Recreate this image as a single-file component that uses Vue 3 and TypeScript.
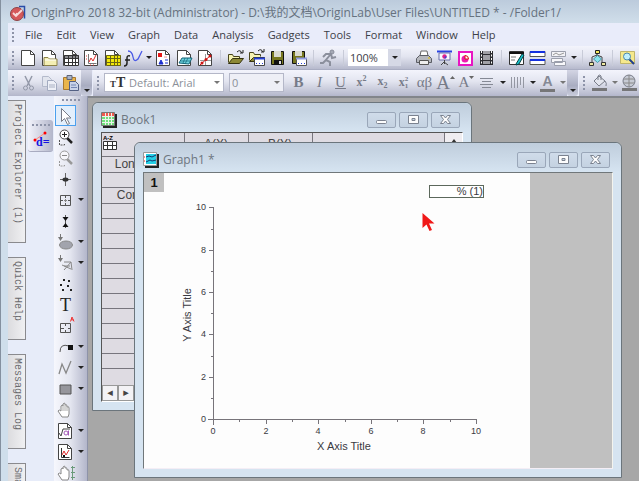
<script setup lang="ts">
interface Item {
  kind: 'icon' | 'caret' | 'sep' | 'zoom'
  name?: string
  label?: string
}

const page = '<path d="M3.500 2.500h9l4 4v11h-13z" fill="#fff" stroke="#444"/><path d="M12.500 2.500v4h4" fill="none" stroke="#444"/>'
const grid = '<path d="M4 7h15v3H4z" fill="#8a8a8e"/><path d="M4.500 7.500h14v10h-14zM4 10.500h15M4 14.500h15M8.500 7v11M12.500 7v11M15.500 7v11" fill="none" stroke="#333"/>'

const glyphs: Record<string, string> = {
  new: page,
  folder: page + '<path d="M5 9.500h4l1.500 1.500h7.500v6.500H5z" fill="#f4efb4" stroke="#8b8146"/><path d="M6 12h11" stroke="#fff"/>',
  book: page + '<path d="M4 7h15v11H4z" fill="#fff"/>' + grid,
  graph: page + '<path d="M7.500 6v9.500h8" fill="none" stroke="#777"/><path d="M8 14l2-4 2 3 3-6" fill="none" stroke="#e02a2a"/><path d="M5 8h1M5 11h1M9 17h1M12 17h1" stroke="#d33"/>',
  matrix: page + '<path d="M4 7h15v11H4z" fill="#f2e90a"/><path d="M4.500 7.500h14v10h-14zM4 10.500h15M4 14.500h15M8.500 7v11M12.500 7v11M15.500 7v11" fill="none" stroke="#6b6614"/>',
  fn: '<path d="M7 8q-3-1-3 2v5q0 3-3 3M2 12h5" fill="none" stroke="#222" stroke-width="1.500"/><path d="M5 3q4 0 5 6t5 2l4-8" fill="none" stroke="#4b5ae6" stroke-width="1.300"/>',
  layout: page + '<path d="M5 5h4v4H5z" fill="#e41616"/><path d="M6 16l2-4 2 4zM12 15h3M12 12h3" stroke="#1b2fd0" fill="#1b2fd0"/><path d="M11 9h3" stroke="#e99"/>',
  surface: page + '<path d="M5 15l3-5h10l-3 6z" fill="#6fd4e0" stroke="#146478"/><path d="M7 13h9M11 10l-2 5M14 10l-3 6" stroke="#146478" stroke-width=".7"/>',
  funcplot: page + '<path d="M10.500 6v11M5 12.500h11" stroke="#999"/><path d="M5 17l11-10" stroke="#d01414"/><circle cx="7" cy="15" r="1.500" fill="#d01414"/><circle cx="11" cy="11.500" r="1.500" fill="#d01414"/><circle cx="15" cy="8" r="1.500" fill="#d01414"/>',
  open: '<path d="M3.500 14.500v-8h4l1 2h6v2" fill="#f6f3b3" stroke="#48441a"/><path d="M3.500 15.500l4-5h11l-4 5z" fill="#8c8836" stroke="#36330f"/><path d="M12 4q3-3 5 1m1-3v3h-3" fill="none" stroke="#222"/>',
  opent: '<path d="M3.500 12.500v-8h4l1 2h6v2" fill="#f6f3b3" stroke="#48441a"/><path d="M3.500 13.500l4-4h11l-4 4z" fill="#8c8836" stroke="#36330f"/><path d="M12 3q3-3 5 1m1-3v3h-3" fill="none" stroke="#222"/><path d="M8.500 10.500h10v7h-10z" fill="#fff" stroke="#444"/><path d="M8 10.500h11" stroke="#2540d8" stroke-width="2"/><path d="M10 15.500h7" stroke="#2540d8" stroke-dasharray="1 2"/>',
  save: '<path d="M4.500 3.500h12v13h-12z" fill="#77771f" stroke="#111"/><path d="M7 3h7v6H7z" fill="#d9d9cf"/><path d="M7 12h8v5H7z" fill="#111"/><path d="M12 13h2v3h-2z" fill="#ddd"/>',
  savet: '<path d="M4.500 3.500h12v12h-12z" fill="#77771f" stroke="#111"/><path d="M7 3h7v5H7z" fill="#d9d9cf"/><path d="M8.500 10.500h10v7h-10z" fill="#fff" stroke="#555"/><path d="M8 10.500h11" stroke="#8f9be0" stroke-width="2"/><path d="M10 15.500h7" stroke="#2540d8" stroke-dasharray="1 2"/>',
  run: '<circle cx="14" cy="4" r="2" fill="#a5a9b5" stroke="#898d9a"/><path d="M5 9l3-3h5l1 4 4-1M12 7l-4 5 4 2v4M8 12l-3 3H2" fill="none" stroke="#8b8f9c" stroke-width="2"/>',
  print: '<path d="M7 8l1-5h6l1 5" fill="#fff" stroke="#666"/><path d="M3.500 10.500l3-3h9l3 3v4h-15z" fill="#b6b8be" stroke="#5b5d65"/><path d="M6.500 12.500h9v4h-9z" fill="#eee" stroke="#555"/><path d="M15 10h2" stroke="#e9c400"/>',
  slides: '<path d="M3 3.500h15" stroke="#2a43e0" stroke-width="2"/><path d="M5 5h11v7H5z" fill="#f8f8ff" stroke="#6a70a8"/><circle cx="10.500" cy="8.500" r="2.200" fill="#e0208c"/><path d="M10.500 8.500h2.200a2.200 2.200 0 0 1-2 2.200z" fill="#2b45dc"/><path d="M10.500 12v4M7 17l3-3 4 3" fill="none" stroke="#444"/>',
  magenta: '<path d="M4 4h13v13H4z" fill="#fff" stroke="#e815c2" stroke-width="2"/><circle cx="10" cy="11" r="3.500" fill="#ee1cae"/><path d="M10 11V7.500a3.500 3.500 0 0 1 3.500 3.500z" fill="#fff" stroke="#d11"/>',
  film: '<path d="M4 3h13v14H4z" fill="#2c2c31"/><path d="M7 3h7v3H7zM7 7h7v5H7zM7 13h7v3H7z" fill="#a0a0a6"/><path d="M5.500 3v14M15.500 3v14" stroke="#fff" stroke-dasharray="2 1.500"/>',
  edit: '<path d="M3.500 3.500h14v13h-14z" fill="#fff" stroke="#333"/><path d="M3 4h15v2H3z" fill="#111"/><path d="M5 9h5M5 12h4" stroke="#777"/><path d="M10 16l6-10 2 1-5 9-3 1z" fill="#18c6cf" stroke="#063c40"/>',
  split: '<path d="M3 3.500h15v5H3zM3 11.500h15v5H3z" fill="#fff" stroke="#555"/><path d="M3 4h15M3 12h15" stroke="#1430df" stroke-width="2"/>',
  stack: '<path d="M3.500 3.500h14v5h-14z" fill="#f3f3f7" stroke="#9b9fac"/><path d="M5 7l3-2 3 2 5-2" fill="none" stroke="#999"/><path d="M3.500 10.500h11v4h-11zM6.500 13.500h11v4h-11z" fill="#f8f8fb" stroke="#9b9fac"/>',
  tree: '<path d="M10 4v4M5 14V9l5-2 5 2v5" stroke="#444" fill="none"/><path d="M8.500 2.500h4v3h-4z" fill="#f5e95c" stroke="#222"/><path d="M10.500 7.500l4 3.500-4 3.500-4-3.500z" fill="#8be4ee" stroke="#4798aa"/><path d="M2.500 14.500h4v3h-4zM14.500 14.500h4v3h-4z" fill="#eee9a0" stroke="#333"/>',
  find: '<path d="M3.500 3.500h14v12h-14z" fill="#f6e98c" stroke="#c0b56b"/><path d="M12 11l5 5" stroke="#1f3d8c" stroke-width="2"/><circle cx="10" cy="8.500" r="3.500" fill="#bff0ff" stroke="#4b88aa"/>',
  cut: '<path d="M7 3l5 10M14 3L9 13" stroke="#9398a8" stroke-width="1.500"/><circle cx="7.500" cy="15" r="2" fill="none" stroke="#9398a8"/><circle cx="13.500" cy="15" r="2" fill="none" stroke="#9398a8"/>',
  copy: '<path d="M3.500 3.500h6l3 3v7h-9z" fill="#e2e5ee" stroke="#b4bacb"/><path d="M8.500 7.500h6l3 3v7h-9z" fill="#eef0f7" stroke="#a3abc0"/><path d="M10 12h6M10 14h6" stroke="#aab1c3"/>',
  paste: '<path d="M3.500 4.500h12v12h-12z" fill="#eab54c" stroke="#a9792f"/><path d="M7 2.500h5v4H7z" fill="#aab3c6" stroke="#5d6578"/><path d="M9.500 8.500h6l3 3v6h-9z" fill="#c9d2e8" stroke="#536084"/><path d="M11 12h5M11 14.500h6" stroke="#7385b4"/>',
  align: '<path d="M3 5.500h13M5 8.500h9M3 11.500h13M5 14.500h9" stroke="#858995"/>',
  columns: '<path d="M4.500 4v11M7.500 4v11M10.500 4v11M13.500 4v8M16.500 4v11" stroke="#9497a2"/>',
  bucket: '<path d="M5 8l5-5 6 5-6 5z" fill="#e3e5ed" stroke="#787c88"/><path d="M9 7V3q2-2 3 0v4M16 8q2 2 1 5" fill="none" stroke="#787c88"/><path d="M3 15h15v3H3z" fill="#767678"/>',
  globe: '<circle cx="10" cy="8" r="6" fill="#c7cbd5" stroke="#787c88"/><path d="M5 6h10M5 10h10M10 2v12" stroke="#888"/><path d="M3 15h15v3H3z" fill="#767678"/>',
  pointer: '<path d="M6.500 2.500v13l3-3 3 6 2-1-3-5.500h4.500z" fill="#fff" stroke="#777b86"/>',
  zoomin: '<path d="M12 11l5 5" stroke="#222" stroke-width="2.500"/><circle cx="9.500" cy="7.500" r="4.500" fill="#fff" stroke="#444"/><path d="M7 7.500h5M9.500 5v5" stroke="#222"/><path d="M4.500 13v5h5v-2" fill="none" stroke="#555" stroke-dasharray="2 1"/>',
  zoomout: '<path d="M12 11l5 5" stroke="#999" stroke-width="2.500"/><circle cx="9.500" cy="7.500" r="4.500" fill="#f7f7fb" stroke="#999"/><path d="M7 7.500h5" stroke="#888"/><path d="M4.500 13v5h5v-2" fill="none" stroke="#999" stroke-dasharray="2 1"/>',
  reader: '<path d="M10.500 4v13M5 10.500h11" stroke="#666"/><ellipse cx="10.500" cy="10.500" rx="3" ry="2" fill="#333"/>',
  screen: '<path d="M5.500 5.500h10v10h-10zM10.500 5v3M10.500 13v3M5 10.500h3M13 10.500h3" fill="none" stroke="#555"/><path d="M9 10.500h3M10.500 9v3" stroke="#888"/>',
  data: '<path d="M10.500 4v13" stroke="#555"/><path d="M7.500 6h6l-3 4zM7.500 16h6l-3-4z" fill="#111"/>',
  region: '<ellipse cx="11" cy="13" rx="6.500" ry="4" fill="#a2a4ad" stroke="#888"/><path d="M5.500 2v6" stroke="#777"/><path d="M3 5h5l-2.500 4z" fill="#777"/>',
  mask: '<path d="M5.500 2v6" stroke="#777"/><path d="M3 5h5l-2.500 4z" fill="#777"/><path d="M9 9h7M9 17l7-8M7 12l9 4M16 9l1 8M9 13h6" fill="none" stroke="#888"/>',
  draw: '<path d="M8 5h2v2H8zM13 6h2v2h-2zM5 10h2v2H5zM12 11h2v2h-2zM7 15h2v2H7zM15 15h2v2h-2z" fill="#222"/>',
  anno: '<path d="M5.500 7.500h10v9h-10zM10.500 7v3M10.500 14v3M5 12.500h4M13 12.500h3" fill="none" stroke="#555"/><path d="M15.500 5.500l1.500-4.500 2 4.500M16 3.800h2.500" fill="none" stroke="#e33"/>',
  arrow: '<path d="M5 15q0-9 9-6" fill="none" stroke="#555"/><path d="M13 8h5v5h-5z" fill="#111"/>',
  line: '<path d="M4 16L7 6l4 9 5-12" fill="none" stroke="#888" stroke-width="1.300"/>',
  rect: '<path d="M5 6h11v9H5z" fill="#96969c" stroke="#555"/>',
  hand: '<path d="M7 17l-4-6q1-2 3 0V6q2-2 2 0V4q2-2 2 0v1q2-1 2 1v1q2-1 2 1v6l-1 3z" fill="#fff" stroke="#888"/><path d="M8 6v5M10 5v6M12 6v5" stroke="#aaa"/>',
  root: page + '<path d="M4 12l2 3 2-7h7" fill="none" stroke="#444"/><circle cx="11" cy="12" r="2" fill="none" stroke="#a45ab8"/><path d="M13.500 9.500v5" stroke="#a45ab8"/>',
  inset: page + '<path d="M6.500 6v9.500h8" fill="none" stroke="#333"/><path d="M7 13l2-4 2 4 3-5" fill="none" stroke="#e02a2a"/><path d="M8 14h2" stroke="#111" stroke-width="2"/>',
  handr: '<path d="M7 17l-4-6q1-2 3 0V6q2-2 2 0V4q2-2 2 0v1q2-1 2 1v1q2-1 2 1v6l-1 3z" fill="#fff" stroke="#888"/><path d="M17.500 3v14M16 4.500h4M16 9.500h4M16 14.500h4" stroke="#6a9a7a"/>',
}

const icon = (name: string, label: string): Item => ({ kind: 'icon', name, label })
const caret = (label: string): Item => ({ kind: 'caret', label })
const sep: Item = { kind: 'sep' }

const standard: Item[] = [
  icon('new', 'New project'), icon('folder', 'New folder'), icon('book', 'New workbook'),
  icon('graph', 'New graph'), icon('matrix', 'New matrix'), icon('fn', 'New function'),
  caret('Function types'), icon('layout', 'New layout'), icon('surface', 'New surface'),
  icon('funcplot', 'New plot'), sep, icon('open', 'Open'), icon('opent', 'Open template'),
  icon('save', 'Save'), icon('savet', 'Save template'), sep, icon('run', 'Run'), sep,
  { kind: 'zoom' }, icon('print', 'Print'), icon('slides', 'Slide show'),
  icon('magenta', 'Send to slides'), icon('film', 'Video builder'), sep,
  icon('edit', 'Edit'), icon('split', 'Split'), icon('stack', 'Arrange'), caret('Arrange options'),
  sep, icon('tree', 'Project tree'), sep, icon('find', 'Find'),
]

const menus = ['File', 'Edit', 'View', 'Graph', 'Data', 'Analysis', 'Gadgets', 'Tools', 'Format', 'Window', 'Help']
const tabs = ['Project Explorer (1)', 'Quick Help', 'Messages Log', 'Smart Hint Log']

const tools: { name: string; label: string; menu?: boolean }[] = [
  { name: 'pointer', label: 'Pointer' }, { name: 'zoomin', label: 'Zoom in' },
  { name: 'zoomout', label: 'Zoom out' }, { name: 'reader', label: 'Data reader' },
  { name: 'screen', label: 'Screen reader', menu: true }, { name: 'data', label: 'Data selector' },
  { name: 'region', label: 'Region', menu: true }, { name: 'mask', label: 'Mask', menu: true },
  { name: 'draw', label: 'Draw data' }, { name: 'text', label: 'Text' },
  { name: 'anno', label: 'Annotation' }, { name: 'arrow', label: 'Arrow', menu: true },
  { name: 'line', label: 'Line', menu: true }, { name: 'rect', label: 'Rectangle', menu: true },
  { name: 'hand', label: 'Pan' }, { name: 'root', label: 'Equation', menu: true },
  { name: 'inset', label: 'Insert graph', menu: true }, { name: 'handr', label: 'Rescale' },
]

const rows = ['Long Name', '', 'Comments', '', '', '', '', '', '', '', '', '', '', '']
const ticks = [0, 1, 2, 3, 4, 5, 6, 7, 8, 9, 10]
const tickX = (v: number): number => 70 + Math.round(v * 26.3)
const tickY = (v: number): number => 247 - Math.round(v * 21.15)
</script>

<template>
  <div class="app">
    <header class="title">
      <svg class="logo" width="18" height="18" viewBox="0 0 18 18">
        <path d="M10 2.500h5.500v12" fill="none" stroke="#2a4ba8" stroke-width="1.500" />
        <circle cx="8" cy="10" r="6.500" fill="#d5585a" stroke="#8d4347" />
        <path d="M4 9l3 3 6-6M7 12l1-3" fill="none" stroke="#f7dada" stroke-width="1.800" />
      </svg>
      <h1>OriginPro 2018 32-bit (Administrator) - D:\我的文档\OriginLab\User Files\UNTITLED * - /Folder1/</h1>
    </header>

    <nav class="menu">
      <i class="grip"></i>
      <button v-for="m in menus" :key="m">{{ m }}</button>
    </nav>

    <div class="bar">
      <i class="grip"></i>
      <template v-for="(it, i) in standard" :key="i">
        <button v-if="it.kind === 'icon'" class="tool" :aria-label="it.label">
          <svg width="21" height="20" viewBox="0 0 21 20" v-html="glyphs[it.name ?? '']"></svg>
        </button>
        <button v-else-if="it.kind === 'caret'" class="caret" :aria-label="it.label"></button>
        <i v-else-if="it.kind === 'sep'" class="sep"></i>
        <span v-else class="combo zoom">
          <select aria-label="Zoom"><option>100%</option></select><i class="drop"></i>
        </span>
      </template>
    </div>

    <div class="bar format">
      <div class="group">
        <i class="grip"></i>
        <button v-for="n in ['cut', 'copy', 'paste']" :key="n" class="tool" :aria-label="n">
          <svg width="21" height="20" viewBox="0 0 21 20" v-html="glyphs[n]"></svg>
        </button>
      </div>
      <button class="overflow" aria-label="More edit buttons"></button>
      <div class="group">
        <i class="grip"></i>
        <span class="combo font">
          <b class="tt" aria-hidden="true"><small>T</small>T</b>
          <select aria-label="Font"><option>Default: Arial</option></select><i class="drop"></i>
        </span>
        <span class="combo size">
          <select aria-label="Font size"><option>0</option></select><i class="drop"></i>
        </span>
        <button class="tool serif"><b>B</b></button>
        <button class="tool serif"><em>I</em></button>
        <button class="tool serif"><u>U</u></button>
        <button class="tool serif sm"><span>x<sup>2</sup></span></button>
        <button class="tool serif sm"><span>x<sub>2</sub></span></button>
        <button class="tool serif sm">x<span class="both"><span>2</span><span>1</span></span></button>
        <button class="tool serif">αβ</button>
        <button class="tool serif lg">A<svg width="5" height="14"><path d="M0 3l2.500-3L5 3z" fill="#666" /></svg></button>
        <button class="tool serif">A<svg width="5" height="14"><path d="M0 0h5L2.500 3z" fill="#666" /></svg></button>
        <button class="tool" aria-label="Align"><svg width="21" height="20" v-html="glyphs.align"></svg></button>
        <button class="caret" aria-label="Align options"></button>
        <button class="tool" aria-label="Columns"><svg width="21" height="20" v-html="glyphs.columns"></svg></button>
        <button class="caret" aria-label="Column options"></button>
        <button class="tool colour">A</button>
        <button class="caret dim" aria-label="Font colours"></button>
      </div>
      <button class="overflow" aria-label="More format buttons"></button>
      <div class="group last">
        <i class="grip"></i>
        <button class="tool" aria-label="Fill"><svg width="21" height="20" v-html="glyphs.bucket"></svg></button>
        <button class="caret dim" aria-label="Fill colours"></button>
        <button class="tool" aria-label="Line colour"><svg width="21" height="20" v-html="glyphs.globe"></svg></button>
      </div>
    </div>

    <main class="body">
      <aside class="tabs">
        <button v-for="t in tabs" :key="t">{{ t }}</button>
      </aside>
      <div class="dock">
        <div class="mini">
          <i class="hgrip"></i>
          <svg width="22" height="22" viewBox="0 0 22 22">
            <path d="M7 13L17 6" stroke="#ff8a7a" />
            <circle cx="7" cy="13" r="1.500" fill="#f00" /><circle cx="17" cy="6" r="1.500" fill="#f00" />
            <text x="8" y="19" class="dtext">d=</text>
          </svg>
        </div>
      </div>
      <div class="palette">
        <i class="hgrip"></i>
        <div v-for="(t, i) in tools" :key="t.name" class="prow">
          <button class="tool" :class="{ on: i === 0, big: t.name === 'text' }" :aria-label="t.label">
            <template v-if="t.name === 'text'">T</template>
            <svg v-else width="21" height="20" v-html="glyphs[t.name]"></svg>
          </button>
          <button v-if="t.menu" class="caret" :aria-label="t.label + ' options'"></button>
        </div>
      </div>

      <section class="space">
        <article class="win book">
          <header>
            <svg width="18" height="18" viewBox="0 0 18 18">
              <path d="M3 3h14v14H3z" fill="#222" /><path d="M1.500 1.500h13v13h-13z" fill="#6fe07c" stroke="#777" />
              <path d="M2 2h12v3H2z" fill="#f05a4e" /><path d="M2 5.500h12M2 8.500h12M2 11.500h12M5.500 2v12M8.500 2v12M11.500 2v12" stroke="#e9f5ea" />
            </svg>
            <h2>Book1</h2>
            <span class="ctl">
              <button aria-label="Minimize"><svg width="13" height="11"><rect x="1.500" y="6.500" width="10" height="3" rx="1" /></svg></button>
              <button aria-label="Maximize"><svg width="13" height="11"><path d="M1.500 1.500h10v8h-10zM5 4.500h3v2H5z" fill-rule="evenodd" /></svg></button>
              <button aria-label="Close"><svg width="13" height="11"><path d="M1.500 1.500h3l2 2.500 2-2.500h3L8.500 5.500l3 4h-3l-2-2.500-2 2.500h-3l3-4z" /></svg></button>
            </span>
          </header>
          <div class="sheet">
            <table>
              <thead>
                <tr>
                  <th>
                    <svg width="15" height="15" viewBox="0 0 15 15"><text x="0" y="5" class="az">A-Z</text><path d="M.5 6.500h13v8H.5zM0 10.500h14M4.500 6v9M9.500 6v9" fill="#fff" stroke="#333" /></svg>
                  </th>
                  <th>A(X)</th><th>B(Y)</th><th></th>
                </tr>
              </thead>
              <tbody>
                <tr v-for="(r, i) in rows" :key="i"><th>{{ r }}</th><td></td><td></td><td></td></tr>
              </tbody>
            </table>
            <div class="vscroll"><button class="up" aria-label="Scroll up"></button></div>
            <div class="hscroll"><button aria-label="Scroll left">◂</button><button aria-label="Scroll right">▸</button></div>
          </div>
        </article>

        <article class="win plotwin">
          <header>
            <svg width="18" height="18" viewBox="0 0 18 18">
              <path d="M3 3h14v14H3z" fill="#222" /><path d="M1.500 1.500h13v13h-13z" fill="#fff" stroke="#999" />
              <path d="M4 3h10v10H4z" fill="#23cfe6" /><path d="M4 6l3-1 3 1 4-2M4 11l4-2 2 1 4-1" fill="none" stroke="#14386c" />
              <path d="M2 6h1M2 10h1" stroke="#e22" />
            </svg>
            <h2>Graph1 *</h2>
            <span class="ctl">
              <button aria-label="Minimize"><svg width="13" height="11"><rect x="1.500" y="6.500" width="10" height="3" rx="1" /></svg></button>
              <button aria-label="Maximize"><svg width="13" height="11"><path d="M1.500 1.500h10v8h-10zM5 4.500h3v2H5z" fill-rule="evenodd" /></svg></button>
              <button aria-label="Close"><svg width="13" height="11"><path d="M1.500 1.500h3l2 2.500 2-2.500h3L8.500 5.500l3 4h-3l-2-2.500-2 2.500h-3l3-4z" /></svg></button>
            </span>
          </header>
          <div class="canvas">
            <div class="paper">
              <button class="layer">1</button>
              <svg class="plot" width="386" height="294" viewBox="0 0 386 294">
                <path d="M69.500 35v217M64 246.500h269" class="axis" />
                <g v-for="v in ticks" :key="v">
                  <path :d="`M${v % 2 ? 67 : 65} ${tickY(v) - 0.5}h${v % 2 ? 3 : 5}`" class="axis" />
                  <path :d="`M${tickX(v) - 0.5} 247v${v % 2 ? 2 : 4}`" class="axis" />
                  <template v-if="v % 2 === 0">
                    <text :x="62" :y="tickY(v) + 2" text-anchor="end">{{ v }}</text>
                    <text :x="tickX(v) - 1" y="261" text-anchor="middle">{{ v }}</text>
                  </template>
                </g>
                <text x="200" y="277" text-anchor="middle" class="name">X Axis Title</text>
                <text transform="translate(47 142) rotate(-90)" text-anchor="middle" class="name">Y Axis Title</text>
                <rect x="285.500" y="12.500" width="54" height="12" fill="#fff" stroke="#5c685c" />
                <text x="339" y="22" text-anchor="end" class="name">% (1)</text>
                <path d="M278.500 40v15l4-3.500 3 6.500 2.500-1-3-6.500h5.500z" fill="#f01818" />
              </svg>
            </div>
          </div>
        </article>
      </section>
    </main>
  </div>
</template>

<style>
body { margin: 0; overflow: hidden; }
</style>

<style scoped>
* { box-sizing: border-box; }
button { border: 0; padding: 0; background: none; color: inherit; font: inherit; }
.app {
  height: 100vh; overflow: hidden; display: flex; flex-direction: column;
  border-left: 1px solid #84909f; padding-left: 7px; background: #cfdeeb;
  font-family: "Open Sans", "Noto Sans", "Noto Sans CJK SC", sans-serif; font-size: 11px; color: #3c4048;
}
.title {
  flex: none; height: 23px; margin-left: -7px; padding: 2px 0 0 8px; display: flex; align-items: center; gap: 4px;
  background: linear-gradient(#bccbdc, #d0deea);
}
.title .logo { flex: none; }
.title h1 { margin: 0; font-size: 12px; font-weight: 400; line-height: 18px; white-space: nowrap; color: #66727f; }
.menu { flex: none; height: 23px; display: flex; align-items: center; background: #e9ecfa; }
.menu button { padding: 0 7px; line-height: 18px; }
.grip { flex: none; width: 10px; height: 15px; background: radial-gradient(circle at 5px 2px, #8d93a8 1px, transparent 1px) 0 0 / 10px 4px; }
.hgrip { display: block; width: 20px; height: 4px; margin: 0 auto; background: radial-gradient(circle at 2px 2px, #8d93a8 1px, transparent 1px) 0 0 / 4px 4px; }
.bar {
  flex: none; height: 24px; display: flex; align-items: center;
  background: linear-gradient(#f3f4fc, #e3e5f0 45%, #b7bacd); border-bottom: 1px solid #a9adc2;
}
.tool { flex: none; width: 21px; height: 20px; display: flex; align-items: center; justify-content: center; }
.tool svg { flex: none; display: block; }
.caret { flex: none; width: 9px; height: 16px; display: flex; align-items: center; justify-content: center; }
.caret::before, .drop::before, .overflow::before { content: ""; border: 3px solid transparent; border-top-color: #222; border-bottom: 0; }
.caret.dim::before, .drop::before { border-top-color: #777; }
.sep { flex: none; width: 9px; height: 16px; background: linear-gradient(90deg, transparent 4px, #c8cbd8 4px, #c8cbd8 5px, transparent 5px); }
.combo { flex: none; height: 19px; display: flex; align-items: stretch; background: #fff; }
.combo select { appearance: none; flex: 1; min-width: 0; border: 0; padding: 0 2px; background: none; color: inherit; font: inherit; }
.drop { width: 13px; display: flex; align-items: center; justify-content: center; }
.zoom { width: 53px; height: 17px; margin-right: 12px; }
.zoom .drop { background: #d6d9e6; }
.zoom .drop::before { border-top-color: #222; }
.format { height: 26px; background: #e9ecfa; border-bottom: 0; }
.group {
  flex: none; height: 26px; display: flex; align-items: center;
  background: linear-gradient(#f3f4fc, #e3e5f0 45%, #b7bacd); border-bottom: 1px solid #b5b8cc;
}
.last { flex: 1 0 auto; }
.overflow { flex: none; width: 11px; height: 26px; margin-right: 1px; display: flex; align-items: flex-end; justify-content: center; padding-bottom: 4px; background: linear-gradient(#d3d5e4, #a9adc1 60%, #c9ccdc); border-radius: 0 0 3px 3px; }
.font { width: 120px; margin: 0 5px 0 1px; border: 1px solid #b4b7c8; color: #8b8f99; }
.size { width: 55px; margin-right: 4px; border: 1px solid #b4b7c8; background: #eeeff6; color: #8b8f99; }
.tt { width: 22px; padding-left: 5px; font: 700 14px/18px "Liberation Serif", serif; color: #333; }
.tt small { font-size: 9px; }
.serif { font-family: "Liberation Serif", serif; font-size: 15px; color: #777b88; }
.serif sup, .serif sub { font-size: 8px; line-height: 8px; }
.sm { font-weight: 700; font-size: 12px; }
.lg { font-size: 19px; }
.both { display: flex; flex-direction: column; font-size: 7px; line-height: 7px; }
.colour { height: 19px; border-bottom: 3px solid #767678; color: #858995; font: 700 14px/16px "Liberation Sans", sans-serif; width: 15px; margin: 0 3px; }
.body { flex: 1; min-height: 0; display: flex; background: #e7ecf9; }
.tabs { flex: none; width: 19px; padding-top: 4px; display: flex; flex-direction: column; gap: 14px; }
.tabs button {
  flex: none; width: 18px; padding: 3px 0 18px; text-align: left; writing-mode: vertical-rl;
  font: 10px/16px "Liberation Mono", monospace; color: #6a6a6e;
  background: linear-gradient(90deg, #dcdcdf, #f0f0f2); border: 1px solid #8a8a8e; border-left: 0;
}
.dock { flex: none; width: 27px; padding-top: 24px; }
.mini { width: 25px; height: 32px; margin-left: 1px; padding-top: 3px; border-radius: 3px; background: linear-gradient(90deg, #f2f3fb, #b3b6ca); border-bottom: 1px solid #a8abc0; }
.dtext { font: 700 12px "Liberation Serif", serif; fill: #1414e0; }
.palette { flex: none; width: 34px; padding-top: 2px; overflow: hidden; background: linear-gradient(90deg, #f6f7fd, #e3e5ef 50%, #b3b6ca); border-right: 1px solid #8e93a8; }
.palette .hgrip { margin-bottom: 3px; }
.prow { height: 21px; padding-left: 1px; display: flex; align-items: center; }
.palette .tool { height: 21px; }
.on { border: 1px solid #4ba0ee; background: #e3effc; }
.big { font: 18px/20px "Liberation Serif", serif; color: #222; }
.space { flex: 1; min-width: 0; position: relative; overflow: hidden; background: #a7a7a7; border-top: 2px solid #82858a; }
.win { position: absolute; padding: 0 8px 8px; border: 1px solid #6b757c; border-radius: 6px 6px 0 0; background: #d6e4f1; display: flex; flex-direction: column; }
.win > header { flex: none; height: 29px; margin: 0 -8px; padding: 4px 11px 0 7px; display: flex; align-items: center; gap: 3px; border-radius: 6px 6px 0 0; background: linear-gradient(#bfcddc, #d6e4f1); }
.win h2 { margin: 0; flex: 1; font-size: 12px; font-weight: 400; line-height: 18px; color: #6d7680; }
.ctl { display: flex; gap: 3px; }
.ctl button { width: 29px; height: 16px; display: flex; align-items: center; justify-content: center; border: 1px solid #9aa7b9; border-radius: 2px; background: linear-gradient(#d0dcea, #c4d2e1); }
.ctl svg { fill: #fdfdfd; stroke: #7b828f; }
.book { left: 4px; top: 4px; width: 380px; height: 309px; }
.plotwin { left: 46px; top: 44px; width: 488px; height: 336px; }
.sheet { flex: 1; min-height: 0; overflow: hidden; display: grid; grid-template-columns: 1fr 17px; grid-template-rows: 1fr 16px; border: 1px solid #555; border-right-color: #fff; border-bottom-color: #fff; background: #dedbe2; }
.sheet table { border-collapse: collapse; table-layout: fixed; width: 100%; align-self: start; font: 12px/15px "Liberation Sans", sans-serif; color: #444; }
.sheet th, .sheet td { height: 15px; padding: 0; font-weight: 400; border: 1px solid #77757d; border-left: 0; border-top: 0; white-space: nowrap; overflow: hidden; }
.sheet tbody th { padding-left: 6px; }
.sheet thead th { height: 23px; }
.sheet thead th:first-child { width: 82px; text-align: left; padding-left: 1px; }
.sheet thead th:nth-child(2), .sheet thead th:nth-child(3) { width: 64px; }
.az { font: 700 6px "Liberation Sans", sans-serif; }
.vscroll { background: #efedf1; }
.up { display: block; margin: 6px auto; border: 3px solid transparent; border-bottom: 4px solid #333; border-top: 0; }
.hscroll { grid-column: 1 / 3; display: flex; background: #eee; }
.hscroll button { width: 16px; border: 1px solid #999; background: #f3f2f5; font: 11px/12px "DejaVu Sans", sans-serif; color: #444; }
.canvas { flex: 1; min-height: 0; display: flex; border: 1px solid #70777a; border-right-color: #f4f4ee; border-bottom-color: #f4eef6; background: #c0c0c0; }
.paper { position: relative; width: 386px; background: #fdfdfd; }
.layer { position: absolute; left: 0; top: 0; width: 20px; height: 19px; background: #c0c0c0; font: 700 13px/18px "Liberation Sans", sans-serif; color: #111; }
.plot { display: block; }
.plot text { font: 9px "Liberation Sans", sans-serif; fill: #3a3a42; }
.plot .name { font-size: 11px; }
.axis { fill: none; stroke: #77747a; stroke-width: 1; }
</style>
